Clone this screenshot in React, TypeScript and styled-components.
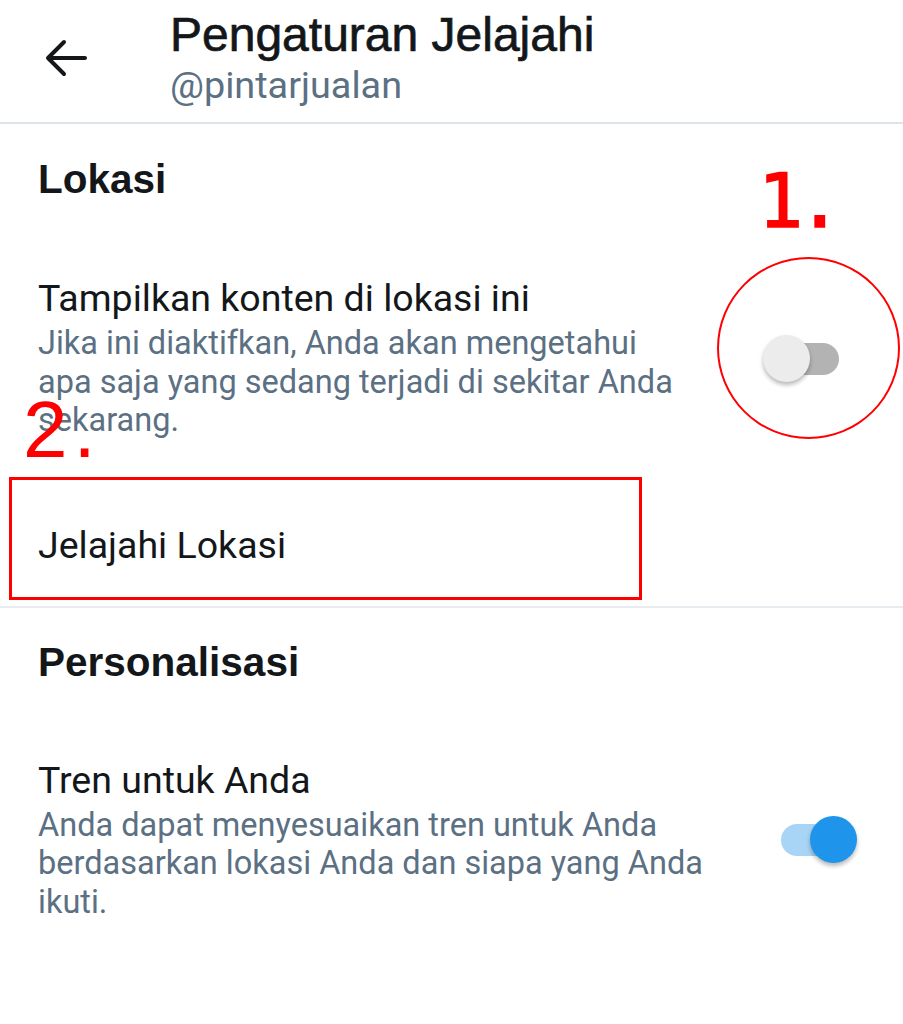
import React from 'react';
import styled, { createGlobalStyle } from 'styled-components';

const GlobalStyle = createGlobalStyle`
  html, body {
    margin: 0;
    padding: 0;
    background: #ffffff;
  }
  * {
    box-sizing: border-box;
  }
`;

const Screen = styled.div`
  position: relative;
  width: 903px;
  height: 1024px;
  overflow: hidden;
  background: #ffffff;
  color: #14171a;
`;

const Header = styled.header`
  display: flex;
  height: 124px;
  border-bottom: 2px solid #dde5ea;
`;

const BackButton = styled.button`
  width: 170px;
  padding: 38px 0 0 44px;
  border: none;
  background: none;
  display: flex;
  align-items: flex-start;
  cursor: pointer;
`;

const TitleBlock = styled.div`
  padding-top: 7px;
  font-family: 'Liberation Sans', Arial, sans-serif;
`;

const Title = styled.h1`
  margin: 0;
  font-size: 48px;
  line-height: 56px;
  font-weight: 400;
  -webkit-text-stroke: 0.7px #14171a;
  color: #14171a;
`;

const Handle = styled.div`
  font-family: Roboto, 'Liberation Sans', sans-serif;
  font-size: 37.8px;
  line-height: 44px;
  color: #5b7083;
`;

const SectionTitle = styled.h2<{ $top: number }>`
  margin: 0;
  padding: ${p => p.$top}px 0 0 38px;
  font-family: 'Liberation Sans', Arial, sans-serif;
  font-size: 40.5px;
  line-height: 48px;
  font-weight: 700;
  color: #14171a;
`;

const SettingRow = styled.div<{ $top: number }>`
  display: flex;
  align-items: center;
  justify-content: space-between;
  padding: ${p => p.$top}px 0 0 38px;
`;

const SettingText = styled.div`
  font-family: Roboto, 'Liberation Sans', sans-serif;
`;

const SettingLabel = styled.div`
  font-size: 37.5px;
  line-height: 42px;
  color: #14171a;
`;

const SettingHint = styled.div`
  margin-top: 5px;
  font-size: 32.5px;
  line-height: 38.5px;
  color: #5b7083;
`;

const LinkRow = styled.div`
  position: relative;
  padding: 84px 0 40px 38px;
  font-family: Roboto, 'Liberation Sans', sans-serif;
  font-size: 37.5px;
  line-height: 42px;
  color: #14171a;
  border-bottom: 2px solid #e6ecf0;
`;

const Switch = styled.div<{ $right: number }>`
  position: relative;
  width: 76px;
  height: 47px;
  margin-right: ${p => p.$right}px;
  flex-shrink: 0;
`;

const Track = styled.div<{ $on: boolean }>`
  position: absolute;
  top: 8px;
  left: ${p => (p.$on ? 0 : 15)}px;
  width: 61px;
  height: 32px;
  border-radius: 16px;
  background: ${p => (p.$on ? '#a8d4f6' : '#b3b3b3')};
`;

const Thumb = styled.div<{ $on: boolean }>`
  position: absolute;
  top: 0;
  left: ${p => (p.$on ? 29 : 0)}px;
  width: 47px;
  height: 47px;
  border-radius: 50%;
  background: ${p => (p.$on ? '#1e95ea' : '#ececec')};
  box-shadow: 0 3px 4px rgba(0, 0, 0, 0.28);
`;

/* red markers drawn over the settings */
const Marker = styled.div<{ $mono?: boolean }>`
  position: absolute;
  color: #ff0000;
  line-height: 1;
  font-family: ${p => (p.$mono ? "'DejaVu Sans Mono', monospace" : "'Liberation Sans', Arial, sans-serif")};
`;

const StepOne = styled(Marker)`
  left: 758px;
  top: 164px;
  font-size: 75px;
  font-weight: 400;
  letter-spacing: -6px;
  -webkit-text-stroke: 1.6px #ff0000;
`;

const StepTwo = styled(Marker)`
  left: 23px;
  top: 390px;
  font-size: 80px;
  letter-spacing: 6px;
`;

const Ring = styled.div`
  position: absolute;
  left: 717px;
  top: 257px;
  width: 183px;
  height: 182px;
  border: 2.5px solid #ff0000;
  border-radius: 50%;
`;

const Frame = styled.div`
  position: absolute;
  left: 9px;
  top: 37px;
  width: 633px;
  height: 123px;
  border: 3px solid #ff0000;
`;

const Toggle: React.FC<{ on: boolean; right: number }> = ({ on, right }) => (
  <Switch $right={right}>
    <Track $on={on} />
    <Thumb $on={on} />
  </Switch>
);

export default function App() {
  return (
    <Screen>
      <GlobalStyle />
      <Header>
        <BackButton aria-label="Kembali">
          <svg width="44" height="40" viewBox="0 0 44 40" fill="none">
            <path d="M41 20H5M20 4L4 20l16 16" stroke="#14171a" strokeWidth="4" strokeLinecap="round" strokeLinejoin="round" />
          </svg>
        </BackButton>
        <TitleBlock>
          <Title>Pengaturan Jelajahi</Title>
          <Handle>@pintarjualan</Handle>
        </TitleBlock>
      </Header>

      <SectionTitle $top={31}>Lokasi</SectionTitle>
      <SettingRow $top={74}>
        <SettingText>
          <SettingLabel>Tampilkan konten di lokasi ini</SettingLabel>
          <SettingHint>
            Jika ini diaktifkan, Anda akan mengetahui
            <br />
            apa saja yang sedang terjadi di sekitar Anda
            <br />
            sekarang.
          </SettingHint>
        </SettingText>
        <Toggle on={false} right={64} />
      </SettingRow>

      <LinkRow>
        Jelajahi Lokasi
        <Frame />
      </LinkRow>

      <SectionTitle $top={30}>Personalisasi</SectionTitle>
      <SettingRow $top={73}>
        <SettingText>
          <SettingLabel>Tren untuk Anda</SettingLabel>
          <SettingHint>
            Anda dapat menyesuaikan tren untuk Anda
            <br />
            berdasarkan lokasi Anda dan siapa yang Anda
            <br />
            ikuti.
          </SettingHint>
        </SettingText>
        <Toggle on right={46} />
      </SettingRow>

      <StepOne $mono>1.</StepOne>
      <Ring />
      <StepTwo>2.</StepTwo>
    </Screen>
  );
}
